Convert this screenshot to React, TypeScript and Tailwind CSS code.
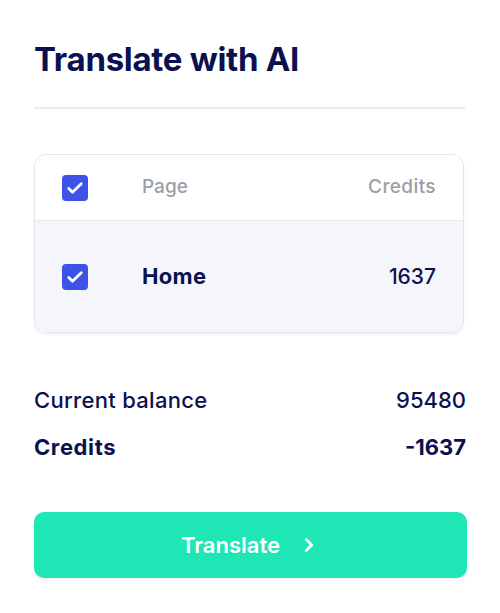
import { ChevronRight } from "lucide-react";

function Check() {
  return (
    <span className="flex h-[26px] w-[26px] shrink-0 items-center justify-center rounded-[4px] bg-[#3d52e6]">
      <svg width="20" height="20" viewBox="0 0 24 24" fill="none">
        <path
          d="M4.5 12.5l4.5 4.5L19.5 7"
          stroke="white"
          strokeWidth="3.4"
          strokeLinecap="round"
          strokeLinejoin="round"
        />
      </svg>
    </span>
  );
}

export default function App() {
  return (
    <div className="min-h-[613px] w-[500px] bg-white px-[34px] pt-[40px] font-['Inter',sans-serif] text-[#0b1150]">
      <h1 className="text-[33px] font-bold leading-[38px] tracking-[-0.3px]">
        Translate with AI
      </h1>
      <div className="mt-[29px] h-[2px] w-[431px] bg-[#e8ecef]" />

      {/* tabella pagine */}
      <div className="mt-[45px] w-[430px] overflow-hidden rounded-[12px] border border-[#e4e6eb] shadow-[0_2px_3px_rgba(0,0,0,0.05)]">
        <div className="flex h-[66px] items-center border-b border-[#e9ebf0] bg-white pl-[27px] pr-[27px]">
          <Check />
          <span className="ml-[54px] text-[19px] font-medium text-[#9aa0a8]">Page</span>
          <span className="ml-auto text-[19px] font-medium tracking-[0.4px] text-[#9aa0a8]">Credits</span>
        </div>
        <div className="flex h-[111px] items-center bg-[#f5f6fc] pl-[27px] pr-[27px]">
          <Check />
          <span className="ml-[54px] text-[22px] font-bold tracking-[0.3px]">Home</span>
          <span className="ml-auto text-[21px] font-medium">1637</span>
        </div>
      </div>

      <div className="mt-[52px] flex items-center justify-between text-[22px] font-medium leading-[30px]">
        <span className="tracking-[0.3px]">Current balance</span>
        <span>95480</span>
      </div>
      <div className="mt-[17px] flex items-center justify-between text-[22px] font-bold leading-[30px]">
        <span className="tracking-[0.6px]">Credits</span>
        <span>-1637</span>
      </div>

      <button className="mt-[50px] flex h-[66px] w-[433px] items-center justify-center gap-[18px] rounded-[10px] bg-[#1ee6b5] text-[22px] font-semibold text-white shadow-[0_2px_4px_rgba(0,0,0,0.05)]">
        Translate
        <ChevronRight size={22} strokeWidth={3} />
      </button>
    </div>
  );
}
